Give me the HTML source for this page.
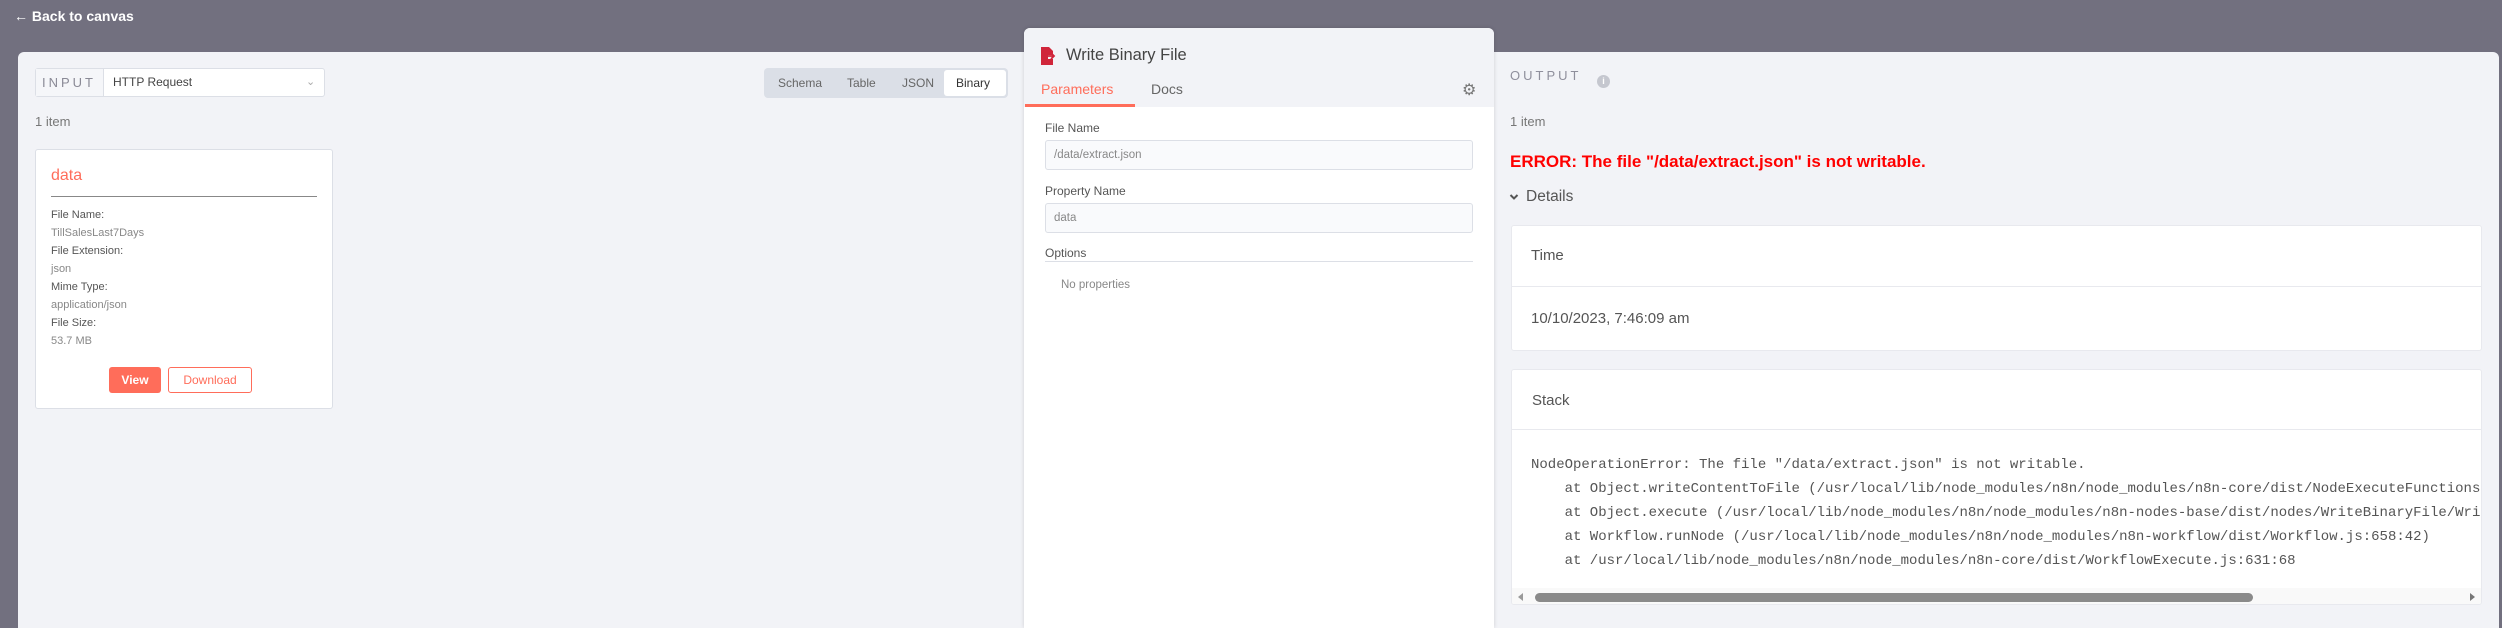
<!DOCTYPE html>
<html><head><meta charset="utf-8"><style>
*{box-sizing:border-box;margin:0;padding:0}
html,body{width:2502px;height:628px;overflow:hidden}
body{background:#72707f;font-family:"Liberation Sans",sans-serif;position:relative;color:#555}
.a{position:absolute;white-space:nowrap}
.mono{font-family:"Liberation Mono",monospace;font-size:14px;color:#555}
</style></head><body>
<div class="a" style="left:14px;top:7px;color:#fff;font-weight:bold;font-size:14px;line-height:18px">&#8592; Back to canvas</div>
<div class="a" style="left:18px;top:52px;width:2481px;height:576px;background:#f2f3f7;border-radius:6px 6px 0 0"></div>
<div class="a" style="left:35px;top:68px;width:290px;height:29px;border:1px solid #dcdfe6;border-radius:3px;background:#fff"></div>
<div class="a" style="left:36px;top:69px;width:68px;height:27px;background:#f5f6f9;border-right:1px solid #dcdfe6;color:#8a8a96;font-size:13px;letter-spacing:3px;line-height:27px;padding-left:6px">INPUT</div>
<div class="a" style="left:113px;top:69px;font-size:12px;line-height:27px;color:#444">HTTP Request</div>
<div class="a" style="left:306px;top:69px;font-size:11px;line-height:27px;color:#aaa">&#8964;</div>
<div class="a" style="left:764px;top:68px;width:244px;height:30px;background:#dbdfe7;border-radius:4px"></div>
<div class="a" style="left:944px;top:70px;width:62px;height:26px;background:#fff;border-radius:3px"></div>
<div class="a" style="left:778px;top:68px;font-size:12px;line-height:30px;color:#666">Schema</div>
<div class="a" style="left:847px;top:68px;font-size:12px;line-height:30px;color:#666">Table</div>
<div class="a" style="left:902px;top:68px;font-size:12px;line-height:30px;color:#666">JSON</div>
<div class="a" style="left:956px;top:68px;font-size:12px;line-height:30px;color:#333">Binary</div>
<div class="a" style="left:35px;top:114px;font-size:13px;color:#777">1 item</div>
<div class="a" style="left:35px;top:149px;width:298px;height:260px;background:#fff;border:1px solid #dcdfe6;border-radius:3px"></div>
<div class="a" style="left:51px;top:167px;font-size:16px;color:#ff6d5a">data</div>
<div class="a" style="left:51px;top:196px;width:266px;height:1px;background:#888"></div>
<div class="a" style="left:51px;top:206px;font-size:11px;line-height:18px;color:#555">
File Name:<br><span style="color:#888">TillSalesLast7Days</span><br>File Extension:<br><span style="color:#888">json</span><br>Mime Type:<br><span style="color:#888">application/json</span><br>File Size:<br><span style="color:#888">53.7 MB</span></div>
<div class="a" style="left:109px;top:367px;width:52px;height:26px;background:#ff6d5a;border-radius:3px;color:#fff;font-size:12px;line-height:26px;text-align:center;font-weight:bold">View</div>
<div class="a" style="left:168px;top:367px;width:84px;height:26px;background:#fff;border:1px solid #ff6d5a;border-radius:3px;color:#ff6d5a;font-size:12px;line-height:24px;text-align:center">Download</div>
<div class="a" style="left:1024px;top:28px;width:470px;height:600px;background:#fff;border-radius:6px 6px 0 0;box-shadow:0 0 4px rgba(0,0,0,.15);overflow:hidden">
  <div style="position:absolute;left:0;top:0;width:470px;height:79px;background:#f2f3f7"></div>
</div>
<svg class="a" style="left:1040px;top:47px" width="18" height="18" viewBox="0 0 18 18"><path d="M1 0h8l4 4v4H8v4h5v6H1z" fill="#d0253a"/><path d="M7 9h7M11 6l3 3-3 3" stroke="#d0253a" stroke-width="1.8" fill="none"/></svg>
<div class="a" style="left:1066px;top:46px;font-size:16.5px;color:#444">Write Binary File</div>
<div class="a" style="left:1041px;top:81px;font-size:14px;color:#ff6d5a">Parameters</div>
<div class="a" style="left:1151px;top:81px;font-size:14px;color:#666">Docs</div>
<div class="a" style="left:1025px;top:104px;width:110px;height:3px;background:#ff6d5a"></div>
<div class="a" style="left:1462px;top:80px;font-size:16px;color:#777">&#9881;</div>
<div class="a" style="left:1045px;top:121px;font-size:12px;color:#555">File Name</div>
<div class="a" style="left:1045px;top:140px;width:428px;height:30px;border:1px solid #dcdfe6;border-radius:3px;background:#f9fafc;font-size:11.5px;line-height:28px;padding-left:8px;color:#888">/data/extract.json</div>
<div class="a" style="left:1045px;top:184px;font-size:12px;color:#555">Property Name</div>
<div class="a" style="left:1045px;top:203px;width:428px;height:30px;border:1px solid #dcdfe6;border-radius:3px;background:#f9fafc;font-size:11.5px;line-height:28px;padding-left:8px;color:#888">data</div>
<div class="a" style="left:1045px;top:246px;font-size:12px;color:#555">Options</div>
<div class="a" style="left:1045px;top:261px;width:428px;height:1px;background:#dcdfe6"></div>
<div class="a" style="left:1061px;top:279px;font-size:11.5px;color:#888">No properties</div>
<div class="a" style="left:1510px;top:68px;font-size:13px;letter-spacing:3px;color:#8f8f9c">OUTPUT</div>
<div class="a" style="left:1597px;top:75px;width:13px;height:13px;border-radius:50%;background:#c5c7cf;color:#fff;font-size:9px;line-height:13px;text-align:center;font-weight:bold">i</div>
<div class="a" style="left:1510px;top:114px;font-size:13px;color:#777">1 item</div>
<div class="a" style="left:1510px;top:152px;font-size:17px;font-weight:bold;color:#f00">ERROR: The file "/data/extract.json" is not writable.</div>
<svg class="a" style="left:1509px;top:192px" width="10" height="10" viewBox="0 0 10 10"><path d="M1.5 3l3.5 3.5L8.5 3" stroke="#555" stroke-width="2" fill="none"/></svg>
<div class="a" style="left:1526px;top:188px;font-size:15.5px;color:#555">Details</div>
<div class="a" style="left:1511px;top:225px;width:971px;height:126px;background:#fff;border:1px solid #e8e9ee;border-radius:3px"></div>
<div class="a" style="left:1511px;top:286px;width:971px;height:1px;background:#e8e9ee"></div>
<div class="a" style="left:1531px;top:247px;font-size:15px;color:#555">Time</div>
<div class="a" style="left:1531px;top:310px;font-size:15px;color:#555">10/10/2023, 7:46:09 am</div>
<div class="a" style="left:1511px;top:369px;width:971px;height:236px;background:#fff;border:1px solid #e8e9ee;border-radius:3px;overflow:hidden">
  <div style="position:absolute;left:0;top:59px;width:971px;height:1px;background:#e8e9ee"></div>
  <div style="position:absolute;left:20px;top:22px;font-size:15px;color:#555">Stack</div>
  <div class="mono" style="position:absolute;left:19px;top:83px;line-height:24px;white-space:pre">NodeOperationError: The file "/data/extract.json" is not writable.
    at Object.writeContentToFile (/usr/local/lib/node_modules/n8n/node_modules/n8n-core/dist/NodeExecuteFunctions.js:1
    at Object.execute (/usr/local/lib/node_modules/n8n/node_modules/n8n-nodes-base/dist/nodes/WriteBinaryFile/WriteBin
    at Workflow.runNode (/usr/local/lib/node_modules/n8n/node_modules/n8n-workflow/dist/Workflow.js:658:42)
    at /usr/local/lib/node_modules/n8n/node_modules/n8n-core/dist/WorkflowExecute.js:631:68</div>
  <div style="position:absolute;left:0;top:218px;width:971px;height:17px;background:#f9f9f9"></div>
  <div style="position:absolute;left:23px;top:223px;width:718px;height:9px;background:#8a8a8a;border-radius:5px"></div>
  <div style="position:absolute;left:6px;top:223px;width:0;height:0;border-top:4px solid transparent;border-bottom:4px solid transparent;border-right:5px solid #999"></div>
  <div style="position:absolute;left:958px;top:223px;width:0;height:0;border-top:4px solid transparent;border-bottom:4px solid transparent;border-left:5px solid #777"></div>
</div>
</body></html>
